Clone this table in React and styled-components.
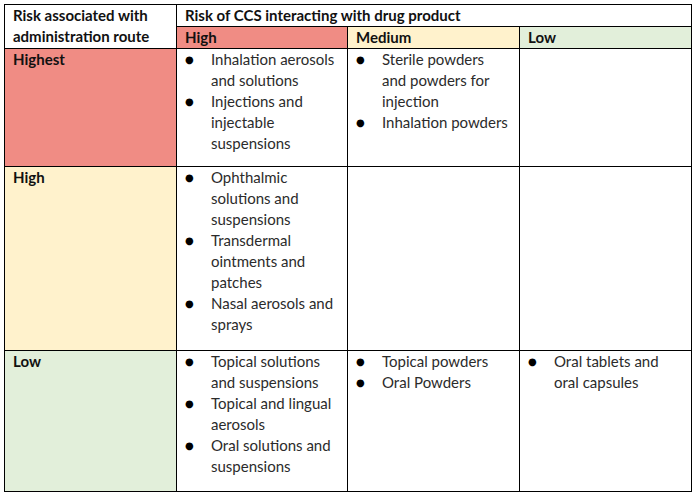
import styled, { createGlobalStyle } from "styled-components";

const GlobalStyle = createGlobalStyle`
  body {
    margin: 0;
    background: #ffffff;
    font-family: Lato, "Open Sans", sans-serif;
  }
`;

const colors = {
  red: "#f08c84",
  yellow: "#fff2cc",
  green: "#e2efda",
};

const Page = styled.div`
  padding: 4px 4px 0 4px;
`;

const Table = styled.table`
  width: 688px;
  border-collapse: collapse;
  table-layout: fixed;
  font-size: 15px;
  line-height: 21px;
  color: #2b2b2b;
`;

const Row = styled.tr`
  height: ${(p) => p.$h}px;
`;

const HeadCell = styled.th`
  border: 1px solid #000;
  padding: 0 8px;
  text-align: left;
  vertical-align: top;
  font-weight: 700;
  color: #111;
  background: ${(p) => (p.$tone ? colors[p.$tone] : "#fff")};
`;

const Cell = styled.td`
  border: 1px solid #000;
  padding: 0 8px;
  vertical-align: top;
  background: ${(p) => (p.$tone ? colors[p.$tone] : "#fff")};
`;

const RowLabel = styled(Cell)`
  font-weight: 700;
  color: #111;
`;

const List = styled.ul`
  margin: 0;
  padding: 0;
  list-style: none;
`;

const Item = styled.li`
  display: flex;
  &::before {
    content: "●";
    flex: 0 0 26px;
    font-family: "DejaVu Sans", sans-serif;
    font-size: 10px;
    color: #000;
  }
`;

const rows = [
  {
    label: "Highest",
    tone: "red",
    h: 118,
    cells: [
      ["Inhalation aerosols and solutions", "Injections and injectable suspensions"],
      ["Sterile powders and powders for injection", "Inhalation powders"],
      [],
    ],
  },
  {
    label: "High",
    tone: "yellow",
    h: 184,
    cells: [
      [
        "Ophthalmic solutions and suspensions",
        "Transdermal ointments and patches",
        "Nasal aerosols and sprays",
      ],
      [],
      [],
    ],
  },
  {
    label: "Low",
    tone: "green",
    h: 141,
    cells: [
      [
        "Topical solutions and suspensions",
        "Topical and lingual aerosols",
        "Oral solutions and suspensions",
      ],
      ["Topical powders", "Oral Powders"],
      ["Oral tablets and oral capsules"],
    ],
  },
];

export default function App() {
  return (
    <Page>
      <GlobalStyle />
      <Table>
        <colgroup>
          <col style={{ width: 172 }} />
          <col style={{ width: 171 }} />
          <col style={{ width: 172 }} />
          <col style={{ width: 172 }} />
        </colgroup>
        <thead>
          <Row $h={21}>
            <HeadCell rowSpan={2}>Risk associated with administration route</HeadCell>
            <HeadCell colSpan={3}>Risk of CCS interacting with drug product</HeadCell>
          </Row>
          <Row $h={21}>
            <HeadCell $tone="red">High</HeadCell>
            <HeadCell $tone="yellow">Medium</HeadCell>
            <HeadCell $tone="green">Low</HeadCell>
          </Row>
        </thead>
        <tbody>
          {rows.map((r) => (
            <Row key={r.label} $h={r.h}>
              <RowLabel $tone={r.tone}>{r.label}</RowLabel>
              {r.cells.map((items, i) => (
                <Cell key={i}>
                  {items.length > 0 && (
                    <List>
                      {items.map((t) => (
                        <Item key={t}>{t}</Item>
                      ))}
                    </List>
                  )}
                </Cell>
              ))}
            </Row>
          ))}
        </tbody>
      </Table>
    </Page>
  );
}
